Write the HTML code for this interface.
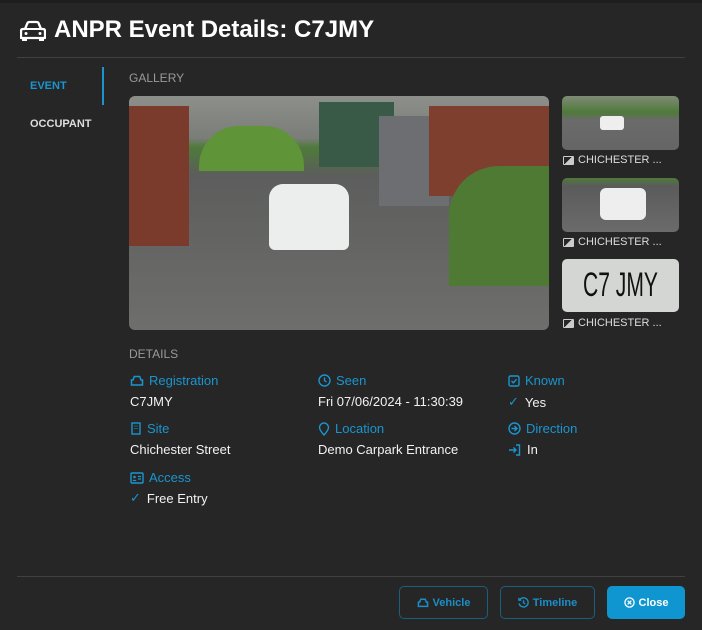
<!DOCTYPE html>
<html><head><style>
*{box-sizing:border-box;margin:0;padding:0}
body{width:702px;height:630px;background:#262626;font-family:"Liberation Sans",sans-serif;position:relative;overflow:hidden;color:#eee}
.a{position:absolute}
.blue{color:#1a95cf}
.lbl{font-size:13px;color:#1a95cf;display:flex;align-items:center;gap:5px}
.val{font-size:13px;color:#f2f2f2;display:flex;align-items:center;gap:6px}
.cap{font-size:11px;color:#ddd;display:flex;align-items:center;gap:4px}
.btn{position:absolute;top:586px;height:33px;border:1px solid #1b5f80;border-radius:5px;color:#1a8fc7;font-size:11px;font-weight:bold;display:flex;align-items:center;justify-content:center;gap:4px}
</style></head><body>
<div class="a" style="left:0;top:0;width:702px;height:3px;background:#1e1e1e"></div>
<svg class="a" style="left:20px;top:20px" width="26" height="22" viewBox="0 0 26 22"><path d="M5 9 L7.5 3 Q8 2 9.5 2 H16.5 Q18 2 18.5 3 L21 9 H23 Q25 9 25 11 V18 H1 V11 Q1 9 3 9 Z" fill="none" stroke="#fff" stroke-width="2.3" stroke-linejoin="round"/><rect x="2" y="18" width="5" height="3" fill="#fff"/><rect x="19" y="18" width="5" height="3" fill="#fff"/><circle cx="6" cy="13.5" r="1.5" fill="#fff"/><circle cx="20" cy="13.5" r="1.5" fill="#fff"/><line x1="6" y1="9" x2="20" y2="9" stroke="#fff" stroke-width="2"/></svg>
<div class="a" style="left:54px;top:16px;font-size:24px;font-weight:bold;color:#fff">ANPR Event Details: C7JMY</div>
<div class="a" style="left:17px;top:57px;width:668px;height:1px;background:#404040"></div>
<div class="a" style="left:30px;top:80px;font-size:11px;font-weight:bold;color:#1a95cf">EVENT</div>
<div class="a" style="left:102px;top:67px;width:2px;height:38px;background:#1a95cf"></div>
<div class="a" style="left:30px;top:118px;font-size:11px;font-weight:bold;color:#ddd">OCCUPANT</div>
<div class="a" style="left:129px;top:71px;font-size:12px;color:#9a9a9a">GALLERY</div>
<div class="a" style="left:129px;top:96px;width:420px;height:234px;border-radius:6px;overflow:hidden;background:linear-gradient(180deg,#8c8f8a 0%,#7a7d78 18%,#4f7a3a 22%,#5c5d5c 34%,#6e6f6d 100%)">
 <div class="a" style="left:0;top:10px;width:60px;height:140px;background:#7a3b2c"></div>
 <div class="a" style="left:190px;top:6px;width:75px;height:65px;background:#3a5a48"></div>
 <div class="a" style="left:70px;top:30px;width:105px;height:45px;border-radius:40px 40px 0 0;background:#5f9438"></div>
 <div class="a" style="left:250px;top:20px;width:70px;height:90px;background:#6c6e72"></div>
 <div class="a" style="left:300px;top:10px;width:120px;height:90px;background:#7e3f2f"></div>
 <div class="a" style="left:320px;top:70px;width:100px;height:120px;background:#4e7a34;border-radius:50px 0 0 0"></div>
 <div class="a" style="left:140px;top:88px;width:80px;height:66px;border-radius:14px 14px 6px 6px;background:#eceeee"></div>
</div>
<div class="a" style="left:562px;top:96px;width:117px;height:54px;border-radius:5px;background:linear-gradient(180deg,#7f8b75 0%,#4f7a3a 30%,#6a6b6a 45%,#646564 100%)"><div class="a" style="left:38px;top:20px;width:24px;height:14px;background:#eee;border-radius:3px"></div></div>
<div class="a" style="left:562px;top:178px;width:117px;height:54px;border-radius:5px;background:linear-gradient(180deg,#4f7a3a 0%,#5a5b5a 15%,#6a6b6a 100%)"><div class="a" style="left:38px;top:10px;width:46px;height:32px;background:#eee;border-radius:6px"></div></div>
<div class="a" style="left:562px;top:259px;width:117px;height:53px;border-radius:5px;background:#d4d6d4;overflow:hidden"><div style="color:#111;font-size:34px;line-height:53px;white-space:nowrap;transform:scaleX(0.62);transform-origin:0 0;margin-left:21px">C7 JMY</div></div>
<div class="a cap" style="left:563px;top:154px"><span style="width:11px;height:9px;border:1px solid #ccc;border-radius:1px;display:inline-block;background:linear-gradient(135deg,transparent 50%,#ccc 50%)"></span>CHICHESTER ...</div>
<div class="a cap" style="left:563px;top:236px"><span style="width:11px;height:9px;border:1px solid #ccc;border-radius:1px;display:inline-block;background:linear-gradient(135deg,transparent 50%,#ccc 50%)"></span>CHICHESTER ...</div>
<div class="a cap" style="left:563px;top:317px"><span style="width:11px;height:9px;border:1px solid #ccc;border-radius:1px;display:inline-block;background:linear-gradient(135deg,transparent 50%,#ccc 50%)"></span>CHICHESTER ...</div>
<div class="a" style="left:129px;top:347px;font-size:12px;color:#9a9a9a">DETAILS</div>

<div class="a lbl" style="left:130px;top:373px"><svg width="14" height="12" viewBox="0 0 14 12"><path d="M3 5 L4.3 1.5 H9.7 L11 5 H12.5 V10 H1.5 V5 Z" fill="none" stroke="#1a95cf" stroke-width="1.5"/></svg>Registration</div>
<div class="a val" style="left:130px;top:394px">C7JMY</div>
<div class="a lbl" style="left:318px;top:373px"><svg width="13" height="13" viewBox="0 0 13 13"><circle cx="6.5" cy="6.5" r="5.5" fill="none" stroke="#1a95cf" stroke-width="1.4"/><path d="M6.5 3.5V6.5L8.5 8" fill="none" stroke="#1a95cf" stroke-width="1.4"/></svg>Seen</div>
<div class="a val" style="left:318px;top:394px">Fri 07/06/2024 - 11:30:39</div>
<div class="a lbl" style="left:508px;top:373px"><svg width="12" height="12" viewBox="0 0 12 12"><rect x="1" y="1" width="10" height="10" rx="1.5" fill="none" stroke="#1a95cf" stroke-width="1.4"/><path d="M3.5 6L5.3 7.8L8.5 4.3" fill="none" stroke="#1a95cf" stroke-width="1.4"/></svg>Known</div>
<div class="a val" style="left:508px;top:394px"><span class="blue">✓</span>Yes</div>

<div class="a lbl" style="left:130px;top:421px"><svg width="12" height="13" viewBox="0 0 12 13"><rect x="2" y="1" width="8" height="11" fill="none" stroke="#1a95cf" stroke-width="1.4"/><path d="M4.5 4h1M6.5 4h1M4.5 6.5h1M6.5 6.5h1" stroke="#1a95cf"/></svg>Site</div>
<div class="a val" style="left:130px;top:442px">Chichester Street</div>
<div class="a lbl" style="left:318px;top:421px"><svg width="12" height="14" viewBox="0 0 12 14"><path d="M6 13C6 13 1.5 8 1.5 5.5A4.5 4.5 0 0 1 10.5 5.5C10.5 8 6 13 6 13Z" fill="none" stroke="#1a95cf" stroke-width="1.4"/></svg>Location</div>
<div class="a val" style="left:318px;top:442px">Demo Carpark Entrance</div>
<div class="a lbl" style="left:508px;top:421px"><svg width="13" height="13" viewBox="0 0 13 13"><circle cx="6.5" cy="6.5" r="5.5" fill="none" stroke="#1a95cf" stroke-width="1.4"/><path d="M3.5 6.5H9M6.5 4L9 6.5L6.5 9" fill="none" stroke="#1a95cf" stroke-width="1.4"/></svg>Direction</div>
<div class="a val" style="left:508px;top:442px"><svg width="13" height="12" viewBox="0 0 13 12"><path d="M1 6H8M5.5 3.5L8 6L5.5 8.5M8 1H11.5V11H8" fill="none" stroke="#1a95cf" stroke-width="1.4"/></svg>In</div>

<div class="a lbl" style="left:130px;top:470px"><svg width="14" height="12" viewBox="0 0 14 12"><rect x="1" y="1" width="12" height="10" rx="1" fill="none" stroke="#1a95cf" stroke-width="1.4"/><circle cx="4.5" cy="5" r="1.3" fill="#1a95cf"/><path d="M2.8 8.5h3.4M8 4.5h3M8 7h3" stroke="#1a95cf" stroke-width="1.2"/></svg>Access</div>
<div class="a val" style="left:130px;top:490px"><span class="blue">✓</span>Free Entry</div>

<div class="a" style="left:17px;top:576px;width:668px;height:1px;background:#404040"></div>
<div class="btn" style="left:399px;width:89px"><svg width="12" height="10" viewBox="0 0 14 12"><path d="M3 5 L4.3 1.5 H9.7 L11 5 H12.5 V10 H1.5 V5 Z" fill="none" stroke="#1a8fc7" stroke-width="1.8"/></svg>Vehicle</div>
<div class="btn" style="left:500px;width:95px"><svg width="11" height="11" viewBox="0 0 12 12"><path d="M2 3A5 5 0 1 1 1.2 7M1 1V3.5H3.5M6 3.5V6.3L7.8 7.5" fill="none" stroke="#1a8fc7" stroke-width="1.5"/></svg>Timeline</div>
<div class="btn" style="left:607px;width:78px;background:#0f96d0;border-color:#0f96d0;color:#fff"><svg width="11" height="11" viewBox="0 0 12 12"><circle cx="6" cy="6" r="5" fill="none" stroke="#fff" stroke-width="1.4"/><path d="M4 4L8 8M8 4L4 8" stroke="#fff" stroke-width="1.4"/></svg>Close</div>
</body></html>
